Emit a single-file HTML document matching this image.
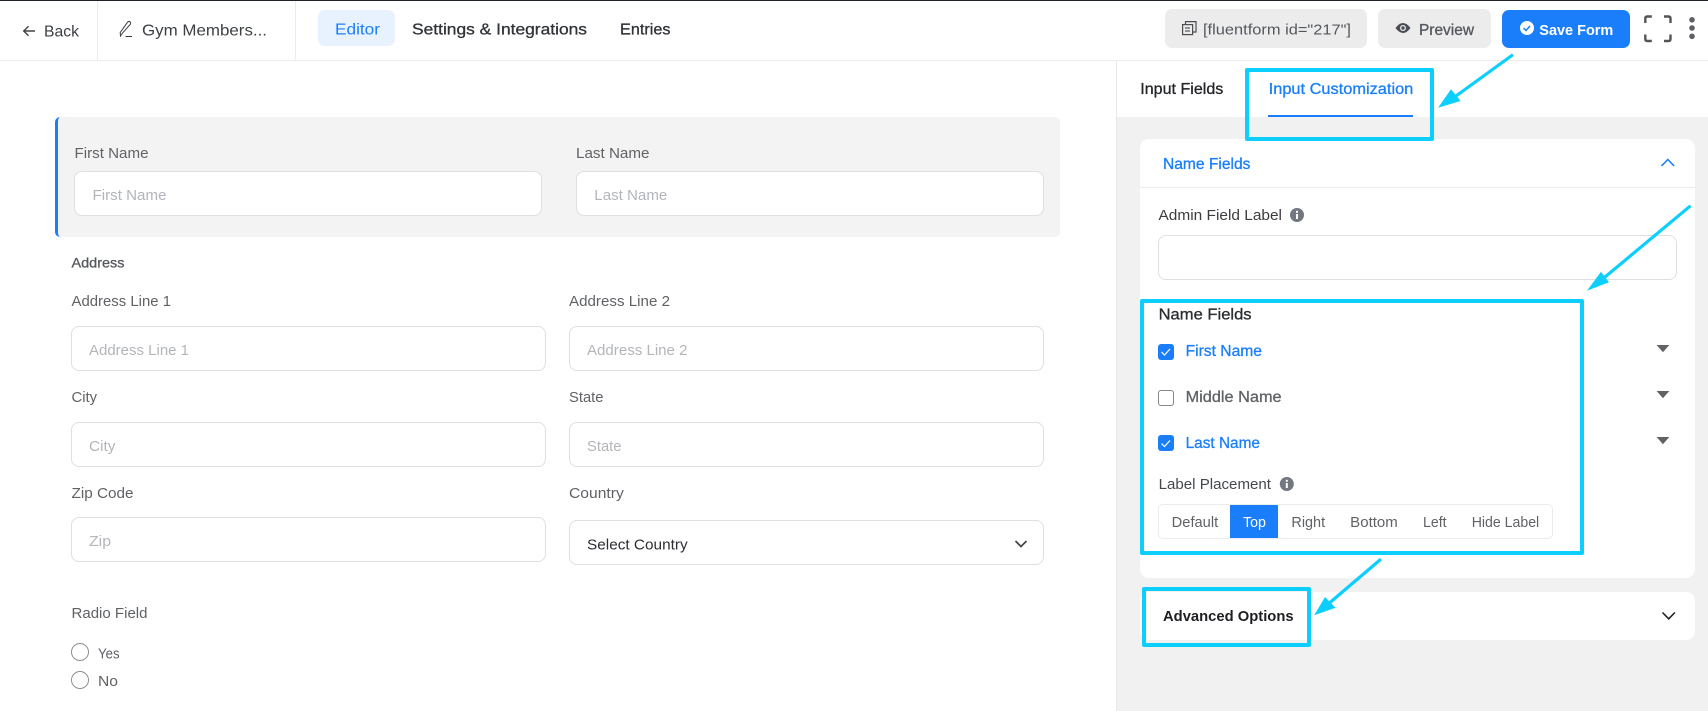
<!DOCTYPE html>
<html lang="en"><head><meta charset="utf-8"><title>Form Editor</title>
<style>
html,body{margin:0;padding:0;width:1708px;height:711px;overflow:hidden;background:#fff;font-family:"Liberation Sans",sans-serif}
.b{position:absolute;box-sizing:border-box}
.i{background:#fff;border:1.5px solid #dedfe2;border-radius:8px}
.c{border:4px solid #0ccfff;border-radius:2px}
svg{position:absolute;left:0;top:0}
text{font-family:"Liberation Sans",sans-serif;font-size:15px;fill:#606266;white-space:pre}
.m{stroke-width:.3;stroke:currentColor}
.l{font-size:15px}
.p{fill:#b3b5ba;font-size:15px}
</style></head><body>
<div class="b" style="left:0;top:0;width:1708px;height:1px;background:#1d2327"></div>
<div class="b" style="left:0;top:60px;width:1708px;height:1px;background:#ececec"></div>
<div class="b" style="left:97px;top:1px;width:1px;height:59px;background:#ececec"></div>
<div class="b" style="left:295px;top:1px;width:1px;height:59px;background:#ececec"></div>
<div class="b" style="left:318px;top:10px;width:77px;height:36px;background:#e8f2ff;border-radius:7px"></div>
<div class="b" style="left:1165px;top:9px;width:202px;height:39px;background:#ececec;border-radius:7px"></div>
<div class="b" style="left:1378px;top:9px;width:113px;height:39px;background:#ececec;border-radius:7px"></div>
<div class="b" style="left:1502px;top:10px;width:128px;height:38px;background:#1a7efb;border-radius:7px"></div>

<div class="b" style="left:1116px;top:61px;width:592px;height:650px;background:#f1f1f1;border-left:1px solid #e8e8e8"></div>
<div class="b" style="left:1117px;top:61px;width:591px;height:56px;background:#fff"></div>
<div class="b" style="left:1268px;top:115px;width:145px;height:2px;background:#1a7efb"></div>
<div class="b" style="left:1140px;top:139px;width:555px;height:439px;background:#fff;border-radius:9px"></div>
<div class="b" style="left:1140px;top:187px;width:555px;height:1px;background:#ececec"></div>
<div class="b" style="left:1140px;top:592px;width:555px;height:48px;background:#fff;border-radius:9px"></div>
<div class="b i" style="left:1158px;top:235px;width:519px;height:45px"></div>

<div class="b" style="left:55px;top:117px;width:1005px;height:120px;background:#f3f3f3;border-left:3px solid #1a7efb;border-radius:5px"></div>
<div class="b i" style="left:74px;top:171px;width:468px;height:45px"></div>
<div class="b i" style="left:576px;top:171px;width:468px;height:45px"></div>
<div class="b i" style="left:71px;top:326px;width:475px;height:45px"></div>
<div class="b i" style="left:569px;top:326px;width:475px;height:45px"></div>
<div class="b i" style="left:71px;top:422px;width:475px;height:45px"></div>
<div class="b i" style="left:569px;top:422px;width:475px;height:45px"></div>
<div class="b i" style="left:71px;top:517px;width:475px;height:45px"></div>
<div class="b i" style="left:569px;top:520px;width:475px;height:45px"></div>
<div class="b" style="left:71px;top:643px;width:18px;height:18px;border:1.2px solid #8d8f94;border-radius:50%"></div>
<div class="b" style="left:71px;top:671px;width:18px;height:18px;border:1.2px solid #8d8f94;border-radius:50%"></div>

<div class="b" style="left:1158px;top:344px;width:16px;height:16px;background:#1a7efb;border-radius:3px"></div>
<div class="b" style="left:1158px;top:390px;width:16px;height:16px;background:#fff;border:1.2px solid #85878c;border-radius:3px"></div>
<div class="b" style="left:1158px;top:435px;width:16px;height:16px;background:#1a7efb;border-radius:3px"></div>
<div class="b" style="left:1158px;top:504px;width:395px;height:35px;border:1.5px solid #ececec;border-radius:5px"></div>
<div class="b" style="left:1230px;top:505px;width:48px;height:33px;background:#1a7efb"></div>

<div class="b c" style="left:1245px;top:68px;width:189px;height:73px"></div>
<div class="b c" style="left:1140px;top:299px;width:444px;height:256px"></div>
<div class="b c" style="left:1142px;top:587px;width:169px;height:60px"></div>

<svg width="1708" height="711" viewBox="0 0 1708 711" xmlns="http://www.w3.org/2000/svg">
<!-- header -->
<path d="M35 31H24M28.5 26.3L23.7 31l4.8 4.7" fill="none" stroke="#444" stroke-width="1.4"/>
<text x="44" y="36.5" textLength="35" lengthAdjust="spacingAndGlyphs" style="fill:#3c3f44;font-size:16px">Back</text>
<path d="M122.5 33l-2 3-.3-3.500 7.500-10.500q1.200-1 2.300-.2t.4 2.400z" fill="none" stroke="#3b3f46" stroke-width="1"/><path d="M125.500 36.500h6.500" stroke="#333" stroke-width="1"/>
<text x="142" y="35.500" textLength="125" lengthAdjust="spacingAndGlyphs" style="fill:#3c3f44;font-size:16px">Gym Members...</text>
<text x="335" y="34.500" textLength="45" lengthAdjust="spacingAndGlyphs" style="fill:#1a7efb;font-size:16px">Editor</text>
<text x="412" y="34.500" textLength="175" lengthAdjust="spacingAndGlyphs" style="fill:#303338;color:#303338;font-size:16px" class="m">Settings &amp; Integrations</text>
<text x="620" y="34.500" textLength="50.500" lengthAdjust="spacingAndGlyphs" style="fill:#303338;color:#303338;font-size:16px" class="m">Entries</text>

<g fill="none" stroke="#4a4d52" stroke-width="1.200"><rect x="1182.600" y="24.600" width="10" height="10"/><path d="M1185.500 24V21.600h10.500V32h-3"/><path d="M1185 28h5M1185 31h5" stroke-width="1.500" stroke="#777"/></g>
<text x="1203" y="34.500" textLength="148" lengthAdjust="spacingAndGlyphs" style="font-size:15px;fill:#55585e">[fluentform id="217"]</text>
<path d="M1395.500 28q7.500-10 15 0q-7.500 10-15 0z" fill="#4a4d52"/><circle cx="1403" cy="28" r="3" fill="#ececec"/><circle cx="1403" cy="28" r="1.700" fill="#4a4d52"/>
<text x="1419" y="35" textLength="55" lengthAdjust="spacingAndGlyphs" style="fill:#55585e;color:#55585e;font-size:15.500px" class="m">Preview</text>
<circle cx="1527" cy="28" r="7" fill="#fff"/><path d="M1523.500 28l2.500 2.500 4-4.500" fill="none" stroke="#1a7efb" stroke-width="1.500"/>
<text x="1539.300" y="35" textLength="74" lengthAdjust="spacingAndGlyphs" style="fill:#fff;font-weight:700;font-size:15px">Save Form</text>
<path d="M1645.300 23v-4.500q0-2 2-2h4.500M1664 16.500h4.500q2 0 2 2V23M1645.300 34.500v4.500q0 2 2 2h4.500M1664 41h4.500q2 0 2-2v-4.500" fill="none" stroke="#555" stroke-width="2.400"/>
<circle cx="1692" cy="19.800" r="2.800" fill="#5c5f66"/><circle cx="1692" cy="28" r="2.800" fill="#5c5f66"/><circle cx="1692" cy="36.300" r="2.800" fill="#5c5f66"/>

<!-- form -->
<text x="74.500" y="158" textLength="74" lengthAdjust="spacingAndGlyphs" class="l">First Name</text>
<text x="576" y="158" textLength="73.500" lengthAdjust="spacingAndGlyphs" class="l">Last Name</text>
<text x="92.500" y="200" textLength="74" lengthAdjust="spacingAndGlyphs" class="p">First Name</text>
<text x="594.300" y="200" textLength="73" lengthAdjust="spacingAndGlyphs" class="p">Last Name</text>
<text x="71.500" y="267.500" textLength="53" lengthAdjust="spacingAndGlyphs" style="font-size:14px;fill:#55585e;color:#55585e" class="m">Address</text>
<text x="71.500" y="306" textLength="99.500" lengthAdjust="spacingAndGlyphs" class="l">Address Line 1</text>
<text x="569" y="306" textLength="101" lengthAdjust="spacingAndGlyphs" class="l">Address Line 2</text>
<text x="89" y="355" textLength="100" lengthAdjust="spacingAndGlyphs" class="p">Address Line 1</text>
<text x="587" y="355" textLength="100.500" lengthAdjust="spacingAndGlyphs" class="p">Address Line 2</text>
<text x="71.500" y="402" textLength="25.500" lengthAdjust="spacingAndGlyphs" class="l">City</text>
<text x="569" y="402" textLength="34.500" lengthAdjust="spacingAndGlyphs" class="l">State</text>
<text x="89" y="451" textLength="26.500" lengthAdjust="spacingAndGlyphs" class="p">City</text>
<text x="587" y="451" textLength="34.500" lengthAdjust="spacingAndGlyphs" class="p">State</text>
<text x="71.500" y="498" textLength="62" lengthAdjust="spacingAndGlyphs" class="l">Zip Code</text>
<text x="569" y="498" textLength="54.800" lengthAdjust="spacingAndGlyphs" class="l">Country</text>
<text x="89" y="546" textLength="22" lengthAdjust="spacingAndGlyphs" class="p">Zip</text>
<text x="587" y="549.500" textLength="100.700" lengthAdjust="spacingAndGlyphs" style="fill:#2c2e33">Select Country</text>
<path d="M1015.500 541l5.500 5.500 5.500-5.500" fill="none" stroke="#444" stroke-width="1.700"/>
<text x="71.500" y="618" textLength="76" lengthAdjust="spacingAndGlyphs" class="l">Radio Field</text>
<text x="98" y="658.500" textLength="21.600" lengthAdjust="spacingAndGlyphs">Yes</text>
<text x="98" y="686" textLength="20" lengthAdjust="spacingAndGlyphs">No</text>

<!-- panel -->
<text x="1140.300" y="94" textLength="83" lengthAdjust="spacingAndGlyphs" style="fill:#24262a;color:#24262a;font-size:15.500px" class="m">Input Fields</text>
<text x="1268.700" y="94" textLength="144.600" lengthAdjust="spacingAndGlyphs" style="fill:#1a7efb;color:#1a7efb;font-size:15.500px" class="m">Input Customization</text>
<text x="1163" y="169" textLength="87.400" lengthAdjust="spacingAndGlyphs" style="fill:#1a7efb;color:#1a7efb;font-size:15.500px" class="m">Name Fields</text>
<path d="M1661.500 166l6.300-6.500 6.300 6.500" fill="none" stroke="#1a7efb" stroke-width="1.600"/>
<text x="1158.500" y="220" textLength="123.500" lengthAdjust="spacingAndGlyphs" style="fill:#3a3c40;font-size:15px">Admin Field Label</text>
<circle cx="1297" cy="215" r="7" fill="#737780"/><rect x="1296" y="214" width="2" height="5" fill="#fff"/><rect x="1296" y="210.800" width="2" height="2" fill="#fff"/>
<text x="1158.600" y="319.500" textLength="93" lengthAdjust="spacingAndGlyphs" style="fill:#2a2c30;color:#2a2c30;font-size:16px" class="m">Name Fields</text>
<path d="M1161.500 352l3 3 5.500-6" fill="none" stroke="#fff" stroke-width="1.200"/>
<path d="M1161.500 443.500l3 3 5.500-6" fill="none" stroke="#fff" stroke-width="1.200"/>
<text x="1185.600" y="356" textLength="76.400" lengthAdjust="spacingAndGlyphs" style="fill:#1a7efb;color:#1a7efb;font-size:15.500px" class="m">First Name</text>
<text x="1185.600" y="402" textLength="96" lengthAdjust="spacingAndGlyphs" style="fill:#606266;color:#606266;font-size:15.500px" class="m">Middle Name</text>
<text x="1185.600" y="448" textLength="74.400" lengthAdjust="spacingAndGlyphs" style="fill:#1a7efb;color:#1a7efb;font-size:15.500px" class="m">Last Name</text>
<path d="M1656.600 345h12.700l-6.350 7.300z" fill="#606266"/>
<path d="M1656.600 391h12.700l-6.350 7.300z" fill="#606266"/>
<path d="M1656.600 437h12.700l-6.350 7.300z" fill="#606266"/>
<text x="1158.600" y="489" textLength="112.400" lengthAdjust="spacingAndGlyphs" style="fill:#45484d;font-size:15px">Label Placement</text>
<circle cx="1286.800" cy="484" r="7" fill="#737780"/><rect x="1285.800" y="483" width="2" height="5" fill="#fff"/><rect x="1285.800" y="479.800" width="2" height="2" fill="#fff"/>
<text x="1171.700" y="527" textLength="46.500" lengthAdjust="spacingAndGlyphs" style="font-size:14.500px">Default</text>
<text x="1243" y="527" textLength="23" lengthAdjust="spacingAndGlyphs" style="font-size:14.500px;fill:#fff">Top</text>
<text x="1291.400" y="527" textLength="33.700" lengthAdjust="spacingAndGlyphs" style="font-size:14.500px">Right</text>
<text x="1350.200" y="527" textLength="47.600" lengthAdjust="spacingAndGlyphs" style="font-size:14.500px">Bottom</text>
<text x="1423" y="527" textLength="23.600" lengthAdjust="spacingAndGlyphs" style="font-size:14.500px">Left</text>
<text x="1471.700" y="527" textLength="67.500" lengthAdjust="spacingAndGlyphs" style="font-size:14.500px">Hide Label</text>
<text x="1163" y="621" textLength="130.600" lengthAdjust="spacingAndGlyphs" style="fill:#1e1f23;font-weight:700;font-size:15px">Advanced Options</text>
<path d="M1662.500 612.500l6.200 6.300 6.200-6.300" fill="none" stroke="#222" stroke-width="1.600"/>

<!-- arrows -->
<g fill="#0ccfff" stroke="#0ccfff" stroke-width="3.200" stroke-linecap="round">
<path d="M1511.800 55.500L1456 96" fill="none"/>
<path d="M1689.400 206.700L1605 277" fill="none"/>
<path d="M1379.900 560L1330 602.500" fill="none"/>
</g>
<g fill="#0ccfff" stroke="none">
<path d="M1438 107.700L1451 89.300L1460.600 101z"/>
<path d="M1587 290.700L1601 271.700L1609 282.300z"/>
<path d="M1314.200 615.300L1325 597L1335.600 607.700z"/>
</g>
</svg>
</body></html>
